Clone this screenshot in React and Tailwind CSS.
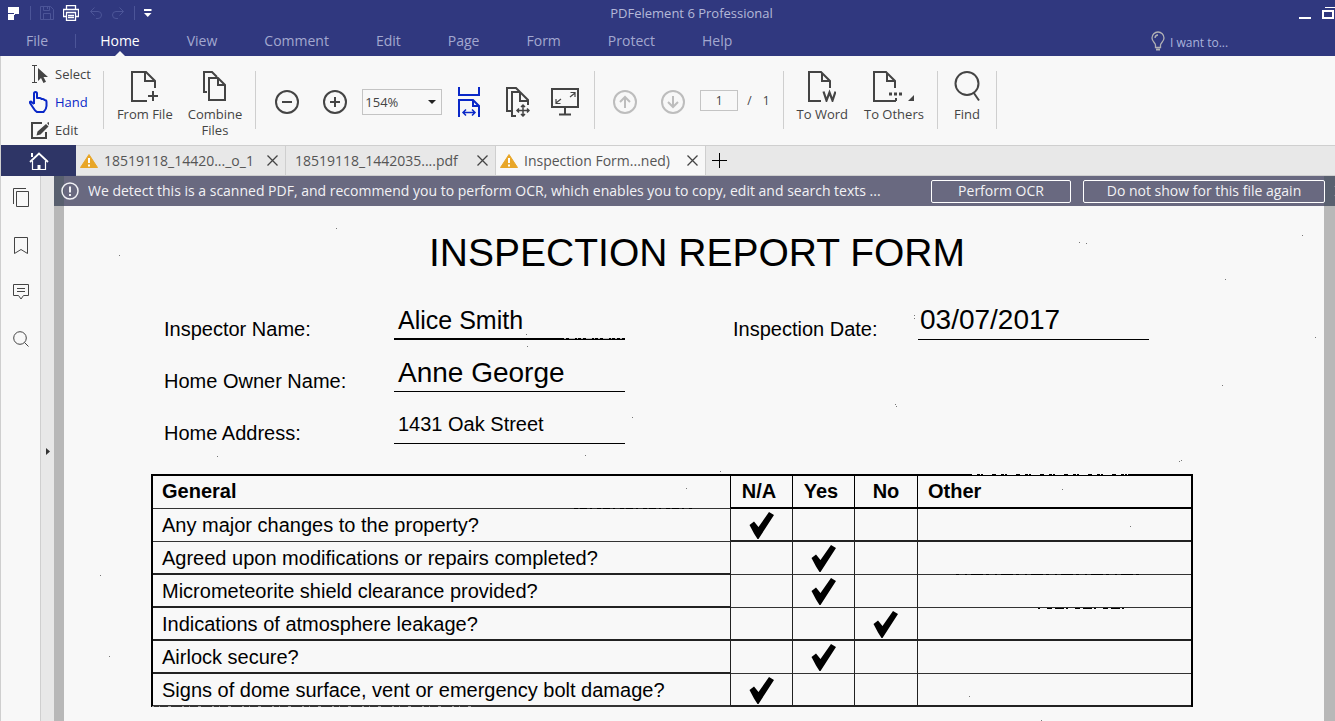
import React from "react";

/* ---------- shared bits ---------- */

function Icon({ w, h, children, className = "", sw = 2 }) {
  return (
    <svg
      width={w}
      height={h}
      viewBox={`0 0 ${w} ${h}`}
      fill="none"
      stroke="currentColor"
      strokeWidth={sw}
      className={`block shrink-0 ${className}`}
      aria-hidden="true"
    >
      {children}
    </svg>
  );
}

function IconButton({ label, className = "", children }) {
  return (
    <button type="button" aria-label={label} className={`block shrink-0 ${className}`}>
      {children}
    </button>
  );
}

function Divider() {
  return <span className="h-[58px] w-px shrink-0 bg-[#cfcfcf]" />;
}

/* ---------- title bar ---------- */

function TitleBar() {
  return (
    <div className="flex h-[26px] items-center">
      <div className="flex flex-1 items-center pl-2 text-[#4c5598]">
        <Icon w={12} h={13} className="text-white">
          <path d="M0 0h11v7H7v1H6v5H0z" fill="currentColor" stroke="none" />
          <path d="M0 6.5h6" stroke="#30387f" strokeWidth="1" />
        </Icon>
        <span className="ml-[10px] h-[14px] w-px bg-[#4c5598]" />
        <IconButton label="Save" className="ml-[9px]">
          <Icon w={14} h={14} sw={1}>
            <path d="M.5.5h10l3 3v10H.5zM3.5 13V7.500h7V13M3.500.5v4h6v-4M7.500 1v2" />
          </Icon>
        </IconButton>
        <IconButton label="Print" className="ml-[9px] text-white">
          <Icon w={16} h={16} sw={1}>
            <path d="M3.500 4.500v-4h9v4M3.500 11.500h-3v-7h15v7h-3M3.500 7.500h9v8h-9zM5 10.500h6M5 12.500h6" strokeWidth="1.300" />
          </Icon>
        </IconButton>
        <IconButton label="Undo" className="ml-[11px]">
          <Icon w={13} h={12} sw={1}>
            <path d="M4.500.5l-4 4 4 4M.5 4.500h7.500a3.500 3.500 0 010 7H6" />
          </Icon>
        </IconButton>
        <IconButton label="Redo" className="ml-2">
          <Icon w={13} h={12} sw={1}>
            <path d="M8.500.5l4 4-4 4M12.500 4.500H5a3.500 3.500 0 000 7h2" />
          </Icon>
        </IconButton>
        <span className="ml-[10px] h-[14px] w-px bg-[#4c5598]" />
        <IconButton label="Customize quick access" className="ml-[9px] text-white">
          <Icon w={8} h={8}>
            <path d="M0 0h7.500v2H0zM0 4h7.500L3.750 8z" fill="currentColor" stroke="none" />
          </Icon>
        </IconButton>
      </div>
      <h1 className="pl-10 text-[13px] leading-4 text-[#b4b8d8]">PDFelement 6 Professional</h1>
      <div className="flex flex-1 items-center justify-end gap-[11px] text-white">
        <IconButton label="Minimize">
          <Icon w={12} h={12}>
            <path d="M0 11h12" />
          </Icon>
        </IconButton>
        <IconButton label="Restore">
          <Icon w={13} h={12}>
            <path d="M3 .5h10" strokeWidth="1" />
            <path d="M1 4h10v7H1z" />
          </Icon>
        </IconButton>
      </div>
    </div>
  );
}

/* ---------- menu ---------- */

const MENUS = ["View", "Comment", "Edit", "Page", "Form", "Protect", "Help"];

function MenuBar() {
  return (
    <nav className="flex h-[30px] items-center pl-[26px] text-[14px] leading-5 text-[#a3a8cf]">
      <button type="button">File</button>
      <span className="mr-[24px] ml-[27px] h-[14px] w-px bg-[#4c5598]" />
      <div className="flex h-full items-center gap-[47px]">
        <button type="button" className="relative h-full text-white">
          Home
          <svg width="10" height="5" viewBox="0 0 10 5" className="absolute bottom-0 left-1/2 -translate-x-1/2" aria-hidden="true">
            <path d="M5 0l5 5H0z" fill="#f8f8f8" />
          </svg>
        </button>
        {MENUS.map((m) => (
          <button type="button" key={m}>
            {m}
          </button>
        ))}
      </div>
      <label className="ml-auto flex w-[184px] items-center gap-[5px]">
        <Icon w={14} h={20} sw={1} className="text-[#b0b0b4]">
          <path
            d="M4.500 16.500v-2.500c0-2-3.500-3.500-3.500-7a6 6 0 0112 0c0 3.500-3.500 5-3.500 7v2.500zM4 7a3.200 3.200 0 013-3"
            strokeWidth="1.300"
          />
          <path d="M5 18.500h4" strokeWidth="2" />
        </Icon>
        <input
          type="text"
          aria-label="I want to..."
          placeholder="I want to..."
          className="w-full min-w-0 bg-transparent pt-[3px] text-[12px] leading-4 outline-none placeholder:text-[#a9b3dc]"
        />
      </label>
    </nav>
  );
}

/* ---------- ribbon ---------- */

function BigButton({ label, icon }) {
  return (
    <button type="button" className="flex shrink-0 flex-col items-center gap-1 text-center">
      {icon}
      <span className="whitespace-pre-line">{label}</span>
    </button>
  );
}

function Ribbon() {
  return (
    <div className="flex h-[90px] items-start border-b border-l border-[#cfcfcf] bg-[#f8f8f8] pt-[15px] text-[13px] leading-4 text-[#444444]">
      <div className="-mt-[11px] flex flex-col pr-[12px] pl-7">
        <button type="button" className="flex h-7 items-center gap-[7px]">
          <Icon w={19} h={18} sw={1} className="text-[#444]">
            <path d="M3 .5h5M3 17.500h5M5.500 1v16" />
            <path d="M9 3v13l3-3 2.500 5 2.500-1.300-2.500-4.700H19z" fill="currentColor" stroke="none" />
          </Icon>
          Select
        </button>
        <button type="button" className="flex h-7 items-center gap-[7px] text-[#0a28c8]">
          <Icon w={19} h={22}>
            <path d="M5 13V2.500Q5 1 6.500 1T8 2.500V7h3q1 0 1.500 1H14q1 0 1.500 1 2 0 2 2v4q0 3-3 6H8Q6 20 4 16.500L1 12q-.5-1.500 1-1.500L5 13" strokeLinejoin="round" />
          </Icon>
          Hand
        </button>
        <button type="button" className="flex h-7 items-center gap-[6px]">
          <Icon w={20} h={18}>
            <path d="M13 2H3v15h14v-6" />
            <path d="M7.500 14.500l1-4L17 3l2.500 2.500-8 8zM18 2l1.500-1L21 3l-1 1.500z" fill="currentColor" stroke="none" />
          </Icon>
          Edit
        </button>
      </div>
      <Divider />
      <div className="flex items-start gap-[15px] px-[13px]">
        <BigButton
          label="From File"
          icon={
            <Icon w={28} h={31}>
              <path d="M16 30H1V1h14l9 9v7M14 2v8h9M22 20v10M17 25h10" />
            </Icon>
          }
        />
        <BigButton
          label={"Combine\nFiles"}
          icon={
            <Icon w={24} h={31}>
              <path d="M4 21H1V1h8l5 5M6 7h9l7 7v15H6zM15 7v7h7" />
            </Icon>
          }
        />
      </div>
      <Divider />
      <div className="flex h-[62px] items-center pr-[15px] pl-[19px]">
        <IconButton label="Zoom out">
          <Icon w={24} h={24}>
            <circle cx="12" cy="12" r="11" />
            <path d="M7 12h10" />
          </Icon>
        </IconButton>
        <IconButton label="Zoom in" className="ml-6">
          <Icon w={24} h={24}>
            <circle cx="12" cy="12" r="11" />
            <path d="M7 12h10M12 7v10" />
          </Icon>
        </IconButton>
        <div className="ml-[15px] grid items-center">
          <select
            aria-label="Zoom level"
            defaultValue="154%"
            className="col-start-1 row-start-1 h-[26px] w-20 appearance-none border border-[#c4c4c4] bg-transparent pl-[2px] text-[13px] leading-4 outline-none"
          >
            <option>100%</option>
            <option>154%</option>
            <option>200%</option>
          </select>
          <Icon w={8} h={4} className="pointer-events-none col-start-1 row-start-1 mr-[6px] justify-self-end text-[#222]">
            <path d="M0 0h8L4 4z" fill="currentColor" stroke="none" />
          </Icon>
        </div>
        <IconButton label="Fit width" className="ml-4 text-[#0a28c8]">
          <Icon w={22} h={30}>
            <path d="M1 0v8h20V0M1 30V13h14l6 6v11M15 13v6h6" />
            <path d="M5 25.500h12M8 22.500l-3 3 3 3M14 22.500l3 3-3 3" strokeWidth="1.500" />
          </Icon>
        </IconButton>
        <IconButton label="Pan pages" className="ml-[26px]">
          <Icon w={24} h={30}>
            <path d="M5 24H1V1h9l4 4M10 29H6V5h8l8 8v5M14 6v8h8" />
            <path d="M17 18v11M11 23.500h12M15 20l2-2 2 2M15 27l2 2 2-2M13 21.500l-2 2 2 2M21 21.500l2 2-2 2" strokeWidth="1.500" />
          </Icon>
        </IconButton>
        <IconButton label="Full screen" className="ml-[21px]">
          <Icon w={28} h={28}>
            <path d="M1 1h26v18H1zM14 19v7M8 26.500h12" />
            <path d="M5 15l5-4M5 11v4.500h4.500M19 9l5-4M19.500 4.500H24V9" strokeWidth="1.200" />
          </Icon>
        </IconButton>
      </div>
      <Divider />
      <div className="flex h-[62px] items-center pr-[13px] pl-[18px]">
        <IconButton label="Previous page" className="text-[#bdbdbd]">
          <Icon w={24} h={24}>
            <circle cx="12" cy="12" r="11" />
            <path d="M12 18V7M7 12l5-5 5 5" />
          </Icon>
        </IconButton>
        <IconButton label="Next page" className="ml-6 text-[#bdbdbd]">
          <Icon w={24} h={24}>
            <circle cx="12" cy="12" r="11" />
            <path d="M12 6v11M7 12l5 5 5-5" />
          </Icon>
        </IconButton>
        <div className="ml-[15px] flex items-center pb-[3px]">
          <input
            type="text"
            aria-label="Page number"
            defaultValue="1"
            className="h-[21px] w-[38px] border border-[#c4c4c4] bg-transparent text-center text-[12px] leading-4 outline-none"
          />
          <span className="ml-[9px] text-[12px]">/</span>
          <span className="ml-[11px] text-[12px]">1</span>
        </div>
      </div>
      <Divider />
      <div className="flex items-start gap-4 px-[13px]">
        <BigButton
          label="To Word"
          icon={
            <Icon w={28} h={31}>
              <path d="M13 30H1V1h12l9 9v7M14 2v8h8" />
              <path d="M15.500 20.500l3 9 3-8 3 8 3-9" strokeWidth="2.200" />
            </Icon>
          }
        />
        <BigButton
          label="To Others"
          icon={
            <Icon w={42} h={31}>
              <path d="M23 30H1V1h12l9 9v7M14 2v8h8M23 30v-3" />
              <path d="M16 23h3M21 23h3M26 23h3" strokeWidth="3" />
              <path d="M41 24v6h-6z" fill="currentColor" stroke="none" />
            </Icon>
          }
        />
      </div>
      <Divider />
      <div className="flex items-start px-4">
        <BigButton
          label="Find"
          icon={
            <Icon w={26} h={31}>
              <circle cx="13" cy="12.500" r="11.500" />
              <path d="M19.500 21.500l5.500 8" />
            </Icon>
          }
        />
      </div>
      <Divider />
    </div>
  );
}

/* ---------- tabs ---------- */

function Warning() {
  return (
    <Icon w={18} h={14} className="mr-[6px]">
      <path d="M9 0.500L17.500 13.500H.5z" fill="#e8a628" stroke="#e8a628" strokeWidth="1" strokeLinejoin="round" />
      <path d="M9 4v5M9 10.500v2" stroke="#fff" strokeWidth="2" />
    </Icon>
  );
}

const TABS = [
  { title: "18519118_14420..._o_1", warn: true, active: false },
  { title: "18519118_1442035....pdf", warn: false, active: false },
  { title: "Inspection Form...ned)", warn: true, active: true },
];

function TabStrip() {
  return (
    <div className="flex h-[30px] border-l border-[#cfcfcf] bg-[#e8e8e8] text-[14px] leading-5 text-[#555]">
      <button type="button" aria-label="Home page" className="-mt-px flex w-[75px] shrink-0 items-center justify-center bg-[#2e3566] pt-px text-white">
        <Icon w={20} h={18}>
          <path d="M1 10l9-8.500L19 10" strokeWidth="1.800" />
          <path d="M3.500 9v8.500h13V9" strokeWidth="1.200" />
          <path d="M2 1h2v4H2z" fill="currentColor" stroke="none" />
          <path d="M8.500 13h3v4.500h-3z" fill="currentColor" stroke="none" />
        </Icon>
      </button>
      <div className="flex flex-1 border-b border-[#cfcfcf]">
        {TABS.map((t) => (
          <div
            key={t.title}
            className={`flex w-[210px] shrink-0 items-center border-r border-[#cfcfcf] pr-[7px] ${t.warn ? "pl-1" : "pl-[9px]"} ${t.active ? "bg-[#f8f8f8]" : ""}`}
          >
            {t.warn && <Warning />}
            <button type="button" className="whitespace-nowrap">
              {t.title}
            </button>
            <IconButton label={`Close ${t.title}`} className="ml-auto text-[#444]">
              <Icon w={11} h={11} sw={1}>
                <path d="M.5.5l10 10M10.500.5l-10 10" strokeWidth="1.300" />
              </Icon>
            </IconButton>
          </div>
        ))}
        <IconButton label="New tab" className="ml-[6px] text-black">
          <Icon w={15} h={15} sw={1}>
            <path d="M0 7.500h15M7.500 0v15" />
          </Icon>
        </IconButton>
      </div>
    </div>
  );
}

/* ---------- side panel ---------- */

function SideRail() {
  return (
    <aside className="flex shrink-0">
      <div className="flex w-[41px] flex-col items-center border-x border-[#cfcfcf] bg-[#f8f8f8] pt-3 pl-[2px] text-[#444]">
        <IconButton label="Thumbnails">
          <Icon w={17} h={20} sw={1}>
            <path d="M.5 16V.5H13M3.500 3.500h12v15h-12z" />
          </Icon>
        </IconButton>
        <IconButton label="Bookmarks" className="mt-[29px]">
          <Icon w={15} h={18} sw={1}>
            <path d="M.5.5h13v16l-6.500-4-6.500 4z" />
          </Icon>
        </IconButton>
        <IconButton label="Comments" className="mt-[29px]">
          <Icon w={17} h={17} sw={1}>
            <path d="M.5.5h15v11h-5l-2.500 3.500-2.500-3.500h-5zM4 4.500h8M4 7.500h8" />
          </Icon>
        </IconButton>
        <IconButton label="Search" className="mt-[30px]">
          <Icon w={17} h={17} sw={1}>
            <circle cx="7" cy="7" r="6.300" />
            <path d="M11.500 11.500l4 4" />
          </Icon>
        </IconButton>
      </div>
      <button type="button" aria-label="Expand panel" className="flex w-[13px] items-center justify-center bg-[#e8e8e8] pt-[6px] text-[#333]">
        <Icon w={4} h={7}>
          <path d="M0 0l4 3.500L0 7z" fill="currentColor" stroke="none" />
        </Icon>
      </button>
    </aside>
  );
}

/* ---------- notice ---------- */

function OcrNotice() {
  return (
    <div
      role="status"
      className="flex h-[30px] items-center overflow-hidden bg-[linear-gradient(to_right,#59606f_10px,#696980_10px,#696980_calc(100%-11px),#59606f_calc(100%-11px))] pl-[7px] text-[14px] leading-5 text-[#f2f2f5]"
    >
      <Icon w={18} h={18}>
        <circle cx="9" cy="9" r="8" strokeWidth="1.500" />
        <path d="M9 4.500v6M9 12v2" />
      </Icon>
      <p className="ml-[9px] min-w-0 flex-1 truncate">
        We detect this is a scanned PDF, and recommend you to perform OCR, which enables you to copy, edit and search texts ...
      </p>
      <button type="button" className="ml-6 h-[23px] w-[140px] shrink-0 rounded-[2px] border border-white">
        Perform OCR
      </button>
      <button type="button" className="ml-3 h-[23px] w-[242px] shrink-0 rounded-[2px] border border-white">
        Do not show for this file again
      </button>
      <IconButton label="Dismiss" className="ml-[9px] w-px overflow-hidden text-[#9aa0b0]">
        <Icon w={10} h={10} sw={1}>
          <path d="M.5.5l9 9M9.500.5l-9 9" />
        </Icon>
      </IconButton>
    </div>
  );
}

/* ---------- document ---------- */

const LABEL = "self-end text-[20px] leading-[22px] whitespace-nowrap";

/* weights: left part and right part of the rule under each row */
const ROWS = [
  { q: "Any major changes to the property?", a: 0, l: "border-b border-b-[#333]", r: "border-b-2 border-b-[#222]" },
  { q: "Agreed upon modifications or repairs completed?", a: 1, l: "border-b-2 border-b-[#222]", r: "border-b border-b-[#333]" },
  { q: "Micrometeorite shield clearance provided?", a: 1, l: "border-b-2 border-b-[#222]", r: "border-b border-b-[#333]" },
  { q: "Indications of atmosphere leakage?", a: 2, l: "border-b-2 border-b-[#222]", r: "border-b-2 border-b-[#222]" },
  { q: "Airlock secure?", a: 1, l: "border-b-2 border-b-[#222]", r: "border-b border-b-[#333]" },
  { q: "Signs of dome surface, vent or emergency bolt damage?", a: 0, l: "border-b-2 border-b-[#333]", r: "border-b-2 border-b-[#222]" },
];

const VERTICALS = ["border-r border-r-[#222]", "border-r border-r-[#222]", "border-r border-r-[#222]"];

function Check() {
  return (
    <svg width="26" height="28" viewBox="0 0 26 28" className="mx-auto block" role="img" aria-label="Checked">
      <path d="M.5 14l4.500-3.500 4.500 5.500L20 1l5 3-15.500 24H8.500L5 22.500z" fill="#000" />
    </svg>
  );
}

/* dust left by the scanner, in page coordinates */
const SPECKS = [
  [55, 49], [272, 22], [1015, 36], [1022, 37], [1238, 29], [1161, 73], [850, 109], [850, 112],
  [1158, 179], [1251, 131], [831, 198], [832, 200], [568, 211], [521, 249], [153, 250], [36, 369], [45, 450],
  [1115, 255], [1117, 254], [977, 514], [905, 490], [998, 283], [1066, 320], [622, 282], [656, 265], [462, 128], [463, 140],
];

const RULE_NOISE = [
  ["M908 268.500h156", "#f8f8f8", "5 3 1 2 9 4"],
  ["M510 302.500h118", "#000", "4 2 7 3 2 5"],
  ["M892 368.500h188", "#000", "3 6 2 4 12 3"],
  ["M974 402.500h92", "#000", "2 7 5 3 9 2"],
  ["M88 500.500h320", "#999", "2 5 1 8 3 11"],
  ["M500 132.500h58", "#bbb", "2 3 6 2 1 3"],
];

function ScanNoise() {
  return (
    <svg className="pointer-events-none absolute inset-0 h-full w-full" aria-hidden="true">
      {SPECKS.map(([x, y]) => (
        <rect key={`${x}-${y}`} x={x} y={y} width="1" height="1" fill="#777" />
      ))}
      {RULE_NOISE.map(([d, c, dash]) => (
        <path key={d} d={d} stroke={c} strokeWidth="1" strokeDasharray={dash} fill="none" />
      ))}
    </svg>
  );
}

function ScannedPage() {
  return (
    <article className="relative mr-[11px] ml-[10px] flex-1 overflow-hidden bg-[#f8f8f8] pt-6 font-['Liberation_Sans',Arial,sans-serif] text-black">
      <h2 className="pl-[6px] text-center text-[39px] leading-[46px]">INSPECTION REPORT FORM</h2>

      <div className="mt-3 grid auto-rows-[52px] grid-cols-[230px_231px_108px_185px_231px] pl-[100px]">
        <span className={LABEL}>Inspector Name:</span>
        <span className="flex items-end border-b-2 border-black pb-[3px] pl-1 text-[25px] leading-[30px]">Alice Smith</span>
        <span />
        <span className={LABEL}>Inspection Date:</span>
        <span className="flex items-end border-b border-black pb-[3px] pl-[2px] text-[28px] leading-8">03/07/2017</span>

        <span className={`${LABEL} col-start-1`}>Home Owner Name:</span>
        <span className="flex items-end border-b border-black pb-[2px] pl-1 text-[28px] leading-8">Anne George</span>

        <span className={`${LABEL} col-start-1`}>Home Address:</span>
        <span className="flex items-end border-b border-black pb-1 pl-1 text-[20px] leading-[30px]">1431 Oak Street</span>
      </div>

      <div className="mt-[30px] pr-[131px] pb-3 pl-[87px]">
        <table className="w-full table-fixed border-separate border-spacing-0 border-r-2 border-l-2 border-black text-left text-[20px] leading-6">
          <colgroup>
            <col />
            <col className="w-[62px]" />
            <col className="w-[62px]" />
            <col className="w-[63px]" />
            <col className="w-[273px]" />
          </colgroup>
          <thead>
            <tr className="h-[35px]">
              <th className="border-t-2 border-r border-b border-black border-b-[#333] pb-[2px] pl-[9px]">General</th>
              <th className="border-t-2 border-r border-b-2 border-black pr-[5px] pb-[2px] text-center">N/A</th>
              <th className="border-t-2 border-r border-b-2 border-black pr-[5px] pb-[2px] text-center">Yes</th>
              <th className="border-t-2 border-r border-b-2 border-black pb-[2px] text-center">No</th>
              <th className="border-t-2 border-b-2 border-black pb-[2px] pl-[10px]">Other</th>
            </tr>
          </thead>
          <tbody>
            {ROWS.map((row) => (
              <tr key={row.q} className="h-[33px]">
                <td className={`border-r border-r-[#222] pl-[9px] whitespace-nowrap ${row.l}`}>{row.q}</td>
                {VERTICALS.map((v, i) => (
                  <td key={i} className={`${v} ${row.r}`}>
                    {row.a === i && <Check />}
                  </td>
                ))}
                <td className={row.r} />
              </tr>
            ))}
          </tbody>
        </table>
      </div>
      <ScanNoise />
    </article>
  );
}

export default function App() {
  return (
    <div className="flex min-h-screen flex-col bg-[#b8b8b8] font-['Open_Sans',sans-serif]">
      <header>
        <div className="bg-[#30387f]">
          <TitleBar />
          <MenuBar />
        </div>
        <Ribbon />
        <TabStrip />
      </header>
      <main className="flex flex-1">
        <SideRail />
        <section className="flex min-w-0 flex-1 flex-col">
          <OcrNotice />
          <ScannedPage />
        </section>
      </main>
    </div>
  );
}
